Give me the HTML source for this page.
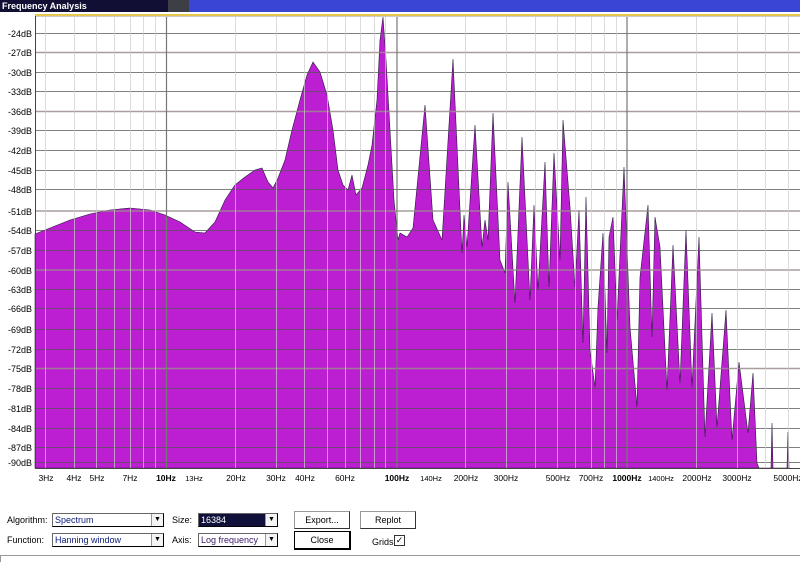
<!DOCTYPE html>
<html><head><meta charset="utf-8"><style>
body{margin:0;width:800px;height:562px;background:#fff;font-family:"Liberation Sans",sans-serif;overflow:hidden;position:relative}
.t{position:absolute;font-size:9px;color:#000}
.sel{position:absolute;height:12px;border:1px solid #000;border-top-color:#666;border-left-color:#666;background:#fff;font-size:9px;line-height:12px;padding-left:2px;box-sizing:content-box;color:#0a1a7a}
.sel .a{position:absolute;right:0;top:0;width:11px;height:12px;border-left:1px solid #999;background:#f4f4f4;font-size:7px;text-align:center;color:#000}
.btn{position:absolute;height:16px;border:1px solid #999;border-right-color:#333;border-bottom-color:#333;background:#fff;font-size:9px;text-align:center;line-height:16px}
</style></head><body>
<div style="position:absolute;left:0;top:0;width:168px;height:12px;background:#111034"></div>
<div style="position:absolute;left:168px;top:0;width:21px;height:12px;background:#3e3f46"></div>
<div style="position:absolute;left:189px;top:0;width:611px;height:12px;background:#3a45d6"></div>
<div style="position:absolute;left:2px;top:0;font-size:9px;font-weight:bold;color:#fff;line-height:12px">Frequency Analysis</div>
<svg width="800" height="562" style="position:absolute;left:0;top:0">
<rect x="35" y="14" width="765" height="2" fill="#e6c64e"/>
<line x1="35" y1="16.5" x2="800" y2="16.5" stroke="#ccc"/>
<polygon fill="#bb1fd1" stroke="#2a1840" stroke-width="0.6" points="35,234 50,228 70,220 90,214 110,210 130,208 150,210 165,215 180,222 195,232 205,233 215,222 225,200 235,185 245,177 255,170 262,168 268,182 273,188 278,178 285,160 292,130 300,100 307,75 313,62 320,72 327,95 333,130 338,170 343,185 348,190 352,175 356,195 362,188 368,165 372,145 377,100 380,40 383,17 386,60 390,130 394,200 398,240 400,233 407,237 413,228 425,105 433,220 442,240 453,59 462,253 464,215 467,247 475,125 482,247 485,220 488,240 493,113 500,260 505,273 508,182 515,303 522,137 530,300 534,205 538,290 545,162 549,287 554,153 560,260 563,120 570,207 575,287 579,210 583,343 586,197 590,350 595,387 598,307 603,233 607,353 609,237 613,217 617,320 624,167 630,327 637,407 640,277 648,205 652,337 655,217 660,247 667,390 673,245 680,383 686,230 692,387 699,237 705,437 712,313 717,427 726,310 732,440 739,362 748,433 753,373 757,463 759,468 771,468 772,423 773,468 787,468 788,432 789,468 35,468"/>
<g stroke="#555" stroke-opacity="0.75" stroke-width="1">
<line x1="35" x2="800" y1="33.5" y2="33.5"/><line x1="35" x2="800" y1="72.5" y2="72.5"/><line x1="35" x2="800" y1="91.5" y2="91.5"/><line x1="35" x2="800" y1="130.5" y2="130.5"/><line x1="35" x2="800" y1="150.5" y2="150.5"/><line x1="35" x2="800" y1="170.5" y2="170.5"/><line x1="35" x2="800" y1="189.5" y2="189.5"/><line x1="35" x2="800" y1="230.5" y2="230.5"/><line x1="35" x2="800" y1="250.5" y2="250.5"/><line x1="35" x2="800" y1="289.5" y2="289.5"/><line x1="35" x2="800" y1="308.5" y2="308.5"/><line x1="35" x2="800" y1="329.5" y2="329.5"/><line x1="35" x2="800" y1="349.5" y2="349.5"/><line x1="35" x2="800" y1="388.5" y2="388.5"/><line x1="35" x2="800" y1="408.5" y2="408.5"/><line x1="35" x2="800" y1="428.5" y2="428.5"/><line x1="35" x2="800" y1="447.5" y2="447.5"/><line x1="35" x2="800" y1="462.5" y2="462.5"/>
</g>
<g stroke="#9a8c8c" stroke-opacity="0.85" stroke-width="1.5">
<line x1="35" x2="800" y1="52.5" y2="52.5"/><line x1="35" x2="800" y1="111.5" y2="111.5"/><line x1="35" x2="800" y1="211" y2="211"/><line x1="35" x2="800" y1="270" y2="270"/><line x1="35" x2="800" y1="368.5" y2="368.5"/>
</g>
<g stroke="#ccc" stroke-opacity="0.7">
<line x1="45.5" x2="45.5" y1="17" y2="468"/><line x1="74.5" x2="74.5" y1="17" y2="468"/><line x1="96.5" x2="96.5" y1="17" y2="468"/><line x1="114.5" x2="114.5" y1="17" y2="468"/><line x1="130.5" x2="130.5" y1="17" y2="468"/><line x1="143.5" x2="143.5" y1="17" y2="468"/><line x1="155.5" x2="155.5" y1="17" y2="468"/>
<line x1="235.5" x2="235.5" y1="17" y2="468"/><line x1="276.5" x2="276.5" y1="17" y2="468"/><line x1="304.5" x2="304.5" y1="17" y2="468"/><line x1="327.5" x2="327.5" y1="17" y2="468"/><line x1="345.5" x2="345.5" y1="17" y2="468"/><line x1="360.5" x2="360.5" y1="17" y2="468"/><line x1="374.5" x2="374.5" y1="17" y2="468"/><line x1="385.5" x2="385.5" y1="17" y2="468"/>
<line x1="465.5" x2="465.5" y1="17" y2="468"/><line x1="506.5" x2="506.5" y1="17" y2="468"/><line x1="535.5" x2="535.5" y1="17" y2="468"/><line x1="557.5" x2="557.5" y1="17" y2="468"/><line x1="575.5" x2="575.5" y1="17" y2="468"/><line x1="591.5" x2="591.5" y1="17" y2="468"/><line x1="604.5" x2="604.5" y1="17" y2="468"/><line x1="616.5" x2="616.5" y1="17" y2="468"/>
<line x1="696.5" x2="696.5" y1="17" y2="468"/><line x1="737.5" x2="737.5" y1="17" y2="468"/><line x1="765.5" x2="765.5" y1="17" y2="468"/><line x1="788.5" x2="788.5" y1="17" y2="468"/>
</g>
<g stroke="#777" stroke-width="1.2">
<line x1="166.5" x2="166.5" y1="17" y2="468"/><line x1="397" x2="397" y1="17" y2="468"/><line x1="627" x2="627" y1="17" y2="468"/>
</g>
<line x1="35.5" x2="35.5" y1="16" y2="469" stroke="#444"/>
<line x1="35" x2="800" y1="468.5" y2="468.5" stroke="#444"/>
<g font-family="Liberation Sans, sans-serif" font-size="9" text-anchor="end" fill="#000">
<text x="32" y="37">-24dB</text><text x="32" y="56">-27dB</text><text x="32" y="76">-30dB</text><text x="32" y="95">-33dB</text><text x="32" y="115">-36dB</text><text x="32" y="134">-39dB</text><text x="32" y="154">-42dB</text><text x="32" y="174">-45dB</text><text x="32" y="193">-48dB</text><text x="32" y="215">-51dB</text><text x="32" y="234">-54dB</text><text x="32" y="254">-57dB</text><text x="32" y="274">-60dB</text><text x="32" y="293">-63dB</text><text x="32" y="312">-66dB</text><text x="32" y="333">-69dB</text><text x="32" y="353">-72dB</text><text x="32" y="372">-75dB</text><text x="32" y="392">-78dB</text><text x="32" y="412">-81dB</text><text x="32" y="432">-84dB</text><text x="32" y="451">-87dB</text><text x="32" y="466">-90dB</text>
</g>
<g font-family="Liberation Sans, sans-serif" font-size="8.5" text-anchor="middle" fill="#000">
<text x="46" y="481">3Hz</text><text x="74" y="481">4Hz</text><text x="97" y="481">5Hz</text><text x="130" y="481">7Hz</text><text x="166" y="481" font-weight="bold">10Hz</text><text x="194" y="481" font-size="7.5">13Hz</text><text x="236" y="481">20Hz</text><text x="276" y="481">30Hz</text><text x="305" y="481">40Hz</text><text x="345" y="481">60Hz</text><text x="397" y="481" font-weight="bold">100Hz</text><text x="431" y="481" font-size="7.5">140Hz</text><text x="466" y="481">200Hz</text><text x="506" y="481">300Hz</text><text x="558" y="481">500Hz</text><text x="591" y="481">700Hz</text><text x="627" y="481" font-weight="bold">1000Hz</text><text x="661" y="481" font-size="7.5">1400Hz</text><text x="697" y="481">2000Hz</text><text x="737" y="481">3000Hz</text><text x="788" y="481">5000Hz</text>
</g>
<line x1="0" x2="800" y1="555.5" y2="555.5" stroke="#999"/>
<line x1="0.5" x2="0.5" y1="555" y2="562" stroke="#999"/>
</svg>
<div class="t" style="left:7px;top:515px">Algorithm:</div>
<div class="sel" style="left:52px;top:513px;width:108px">Spectrum<span class="a">▼</span></div>
<div class="t" style="left:172px;top:515px">Size:</div>
<div class="sel" style="left:198px;top:513px;width:76px;background:#10103a;color:#fff">16384<span class="a">▼</span></div>
<div class="btn" style="left:294px;top:511px;width:54px">Export...</div>
<div class="btn" style="left:360px;top:511px;width:54px">Replot</div>
<div class="t" style="left:7px;top:535px">Function:</div>
<div class="sel" style="left:52px;top:533px;width:108px">Hanning window<span class="a">▼</span></div>
<div class="t" style="left:172px;top:535px">Axis:</div>
<div class="sel" style="left:198px;top:533px;width:76px;color:#3a1a6a">Log frequency<span class="a">▼</span></div>
<div class="btn" style="left:294px;top:531px;width:54px;border:1px solid #000;border-right:2px solid #000;border-bottom:2px solid #000">Close</div>
<div class="t" style="left:372px;top:537px">Grids</div>
<div style="position:absolute;left:394px;top:535px;width:9px;height:9px;border:1px solid #333;font-size:9px;line-height:9px;text-align:center">✓</div>
</body></html>
